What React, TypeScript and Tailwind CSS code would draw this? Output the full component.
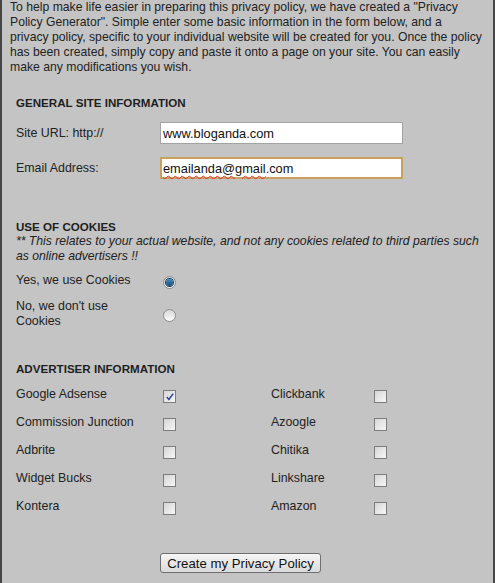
import React from "react";

function Radio({ checked }: { checked?: boolean }) {
  return (
    <span className="flex h-[13px] w-[13px] items-center justify-center rounded-full border border-[#8c8c8c] bg-gradient-to-b from-[#d8d8d8] to-[#fbfbfb]">
      {checked && <span className="h-[7px] w-[7px] rounded-full bg-gradient-to-b from-[#4a8fc0] to-[#0f4a78] ring-1 ring-[#0d3a5e]" />}
    </span>
  );
}

function Checkbox({ checked }: { checked?: boolean }) {
  return (
    <span className="mt-[3px] flex h-[13px] w-[13px] items-center justify-center border border-[#7d7d7d] bg-gradient-to-br from-[#d6d6d6] to-[#f6f6f6]">
      {checked && (
        <svg viewBox="0 0 11 11" className="h-[10px] w-[10px]">
          <path d="M2 5.5 L4.3 8.2 L9 1.8" fill="none" stroke="#3646a0" strokeWidth={1.8} />
        </svg>
      )}
    </span>
  );
}

const advertisers: [string, boolean, string][] = [
  ["Google Adsense", true, "Clickbank"],
  ["Commission Junction", false, "Azoogle"],
  ["Adbrite", false, "Chitika"],
  ["Widget Bucks", false, "Linkshare"],
  ["Kontera", false, "Amazon"],
];

export default function App() {
  return (
    <div className="h-[583px] w-[495px] overflow-hidden border-x-2 border-[#454545] bg-[#c4c4c4] text-[12.4px] leading-[15px] text-[#222] font-['Liberation_Sans',Arial,sans-serif]">
      <p className="whitespace-nowrap pl-[8px] text-[12.2px]">
        To help make life easier in preparing this privacy policy, we have created a "Privacy
        <br />
        Policy Generator". Simple enter some basic information in the form below, and a
        <br />
        privacy policy, specific to your individual website will be created for you. Once the policy
        <br />
        has been created, simply copy and paste it onto a page on your site. You can easily
        <br />
        make any modifications you wish.
      </p>

      <div className="pl-[14px]">
        <h2 className="mt-[20px] text-[11.6px] font-bold text-[#1e1e1e]">GENERAL SITE INFORMATION</h2>

        <div className="mt-[12px] flex h-[22px] items-center">
          <span className="w-[144px]">Site URL: http://</span>
          <div className="flex h-[22px] w-[243px] items-center border border-[#a3a3a3] bg-white pl-[2px] text-[12.8px] text-[#111]">
            www.bloganda.com
          </div>
        </div>

        <div className="mt-[13px] flex h-[22px] items-center">
          <span className="w-[144px]">Email Address:</span>
          <div className="flex h-[22px] w-[243px] items-center border-2 border-[#c9a05c] bg-white pl-[1px] text-[12.8px] text-[#111]">
            <span className="underline decoration-wavy decoration-[#e03030] decoration-1 underline-offset-2">emailanda@gmail</span>
            .com
          </div>
        </div>

        <h2 className="mt-[40px] text-[11.6px] font-bold text-[#1e1e1e]">USE OF COOKIES</h2>
        <p className="whitespace-nowrap text-[12.2px] italic">
          ** This relates to your actual website, and not any cookies related to third parties such
          <br />
          as online advertisers !!
        </p>

        <div className="mt-[9px] flex items-start">
          <span className="w-[147px]">Yes, we use Cookies</span>
          <span className="mt-[3px]">
            <Radio checked />
          </span>
        </div>

        <div className="mt-[10px] flex items-start">
          <span className="w-[147px]">
            No, we don't use
            <br />
            Cookies
          </span>
          <span className="mt-[10px]">
            <Radio />
          </span>
        </div>

        <h2 className="mt-[32px] text-[11.6px] font-bold text-[#1e1e1e]">ADVERTISER INFORMATION</h2>

        <div className="mt-[11px] flex flex-col gap-[13px]">
          {advertisers.map(([left, checked, right]) => (
            <div key={left} className="flex h-[15px] items-start">
              <div className="flex w-[255px] items-start">
                <span className="w-[147px]">{left}</span>
                <Checkbox checked={checked} />
              </div>
              <span className="w-[103px]">{right}</span>
              <Checkbox />
            </div>
          ))}
        </div>

        <button className="ml-[144px] mt-[39px] flex h-[20px] w-[161px] items-center justify-center rounded-[3px] border border-[#6f6f6f] bg-gradient-to-b from-[#f6f6f6] to-[#dadada] text-[13.2px] text-[#111]">
          Create my Privacy Policy
        </button>
      </div>
    </div>
  );
}
